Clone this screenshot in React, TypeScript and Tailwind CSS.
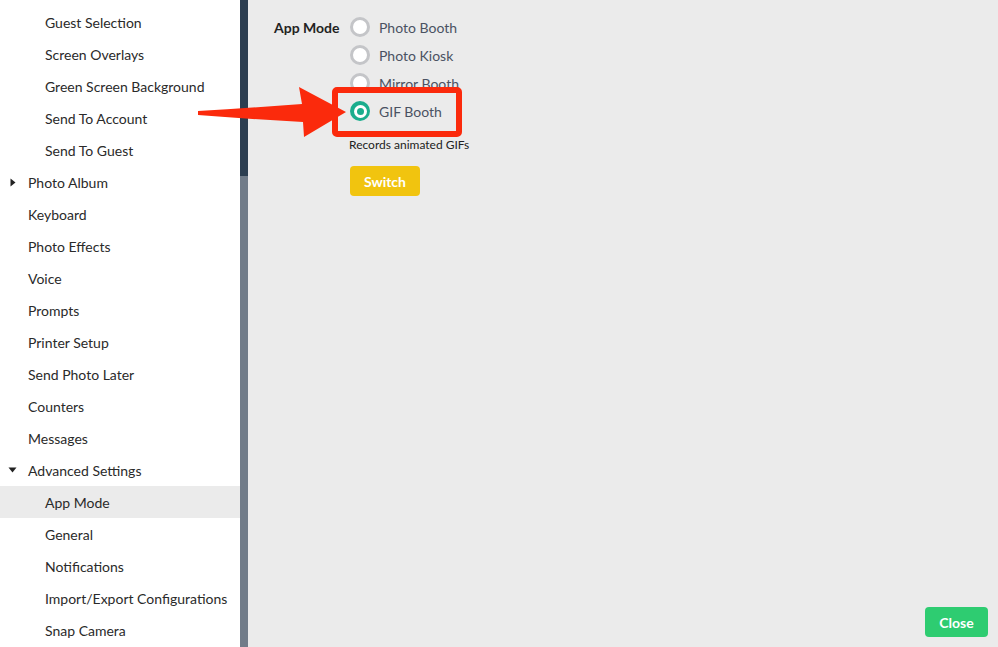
import React from "react";

type Item = { label: string; level: 0 | 1; caret?: "right" | "down"; active?: boolean };

const items: Item[] = [
  { label: "Guest Selection", level: 1 },
  { label: "Screen Overlays", level: 1 },
  { label: "Green Screen Background", level: 1 },
  { label: "Send To Account", level: 1 },
  { label: "Send To Guest", level: 1 },
  { label: "Photo Album", level: 0, caret: "right" },
  { label: "Keyboard", level: 0 },
  { label: "Photo Effects", level: 0 },
  { label: "Voice", level: 0 },
  { label: "Prompts", level: 0 },
  { label: "Printer Setup", level: 0 },
  { label: "Send Photo Later", level: 0 },
  { label: "Counters", level: 0 },
  { label: "Messages", level: 0 },
  { label: "Advanced Settings", level: 0, caret: "down" },
  { label: "App Mode", level: 1, active: true },
  { label: "General", level: 1 },
  { label: "Notifications", level: 1 },
  { label: "Import/Export Configurations", level: 1 },
  { label: "Snap Camera", level: 1 },
];

function Radio({ label, checked }: { label: string; checked?: boolean }) {
  return (
    <div className="flex h-[28px] items-center gap-[9px]">
      {checked ? (
        <span className="flex h-[20px] w-[20px] items-center justify-center rounded-full bg-[#1aad8d]">
          <span className="flex h-[13px] w-[13px] items-center justify-center rounded-full bg-white">
            <span className="h-[7px] w-[7px] rounded-full bg-[#1aad8d]" />
          </span>
        </span>
      ) : (
        <span className="h-[20px] w-[20px] rounded-full border-[3.5px] border-[#c4c5c8] bg-white" />
      )}
      <span className="text-[14px] text-[#4a5262]">{label}</span>
    </div>
  );
}

export default function App() {
  return (
    <div
      className="relative flex h-[647px] w-[998px] overflow-hidden"
      style={{ fontFamily: "Lato, 'Noto Sans', sans-serif" }}
    >
      <aside className="w-[240px] bg-white pt-[6px]">
        {items.map((it) => (
          <div
            key={it.label}
            className={`relative flex h-[32px] items-center text-[14px] text-[#2a2a2a] ${
              it.level === 1 ? "pl-[45px]" : "pl-[28px]"
            } ${it.active ? "bg-[#ebebeb]" : ""}`}
          >
            {it.caret === "right" && (
              <svg className="absolute left-[10px] top-[12px]" width="6" height="9" viewBox="0 0 6 9">
                <path d="M0.5 0.5 L5.5 4.5 L0.5 8.5 Z" fill="#222" />
              </svg>
            )}
            {it.caret === "down" && (
              <svg className="absolute left-[8px] top-[13px]" width="9" height="6" viewBox="0 0 9 6">
                <path d="M0.5 0.5 L8.5 0.5 L4.5 5.5 Z" fill="#222" />
              </svg>
            )}
            {it.label}
          </div>
        ))}
      </aside>

      <div className="flex w-[8px] flex-col bg-[#2c3e50]">
        <div className="h-[176px]" />
        <div className="flex-1 bg-[#717c89]" />
      </div>

      <main className="flex flex-1 flex-col bg-[#ebebeb]">
        <div className="flex pl-[26px] pt-[13px]">
          <div className="flex h-[28px] w-[76px] items-center text-[14px] font-bold text-[#222]">App Mode</div>
          <div className="flex flex-col">
            <Radio label="Photo Booth" />
            <Radio label="Photo Kiosk" />
            <Radio label="Mirror Booth" />
            <Radio label="GIF Booth" checked />
            <div className="-ml-[1px] mt-[12px] text-[12px] leading-[16px] text-[#222]">Records animated GIFs</div>
            <button className="mt-[13px] h-[30px] w-[70px] rounded-[4px] bg-[#f1c40f] text-[14px] font-bold text-white">
              Switch
            </button>
          </div>
        </div>
        <div className="mt-auto flex justify-end pb-[10px] pr-[10px]">
          <button className="h-[30px] w-[63px] rounded-[4px] bg-[#2ecc71] text-[14px] font-bold text-white">
            Close
          </button>
        </div>
      </main>

      <svg className="pointer-events-none absolute left-0 top-0" width="998" height="647" viewBox="0 0 998 647">
        <rect x="335" y="90" width="124" height="44" rx="2" fill="none" stroke="#fb2a0c" strokeWidth="6" />
        <path
          d="M198 111 Q250 108 302 104 L299 87 L346 112 L304 137 L303 122 Q250 119 198 115 Z"
          fill="#fb2a0c"
        />
      </svg>
    </div>
  );
}
